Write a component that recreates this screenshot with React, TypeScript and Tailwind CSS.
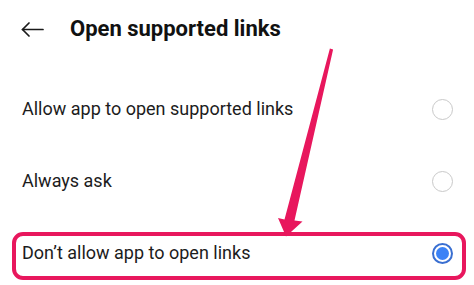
import React from "react";

function Radio({ checked }: { checked?: boolean }) {
  if (checked) {
    return (
      <div className="w-[21px] h-[21px] rounded-full border-[2px] border-[#3a6fd1] flex items-center justify-center shrink-0">
        <div className="w-[13px] h-[13px] rounded-full bg-[#3b82f6]" />
      </div>
    );
  }
  return <div className="w-[21px] h-[21px] rounded-full border-[1.5px] border-[#c9c9c9] shrink-0" />;
}

function Row({ label, checked }: { label: string; checked?: boolean }) {
  return (
    <div className="h-[72px] flex items-center justify-between pl-[22px] pr-[21px]">
      <span className="text-[18px] text-[#1c1c1c] leading-none">{label}</span>
      <Radio checked={checked} />
    </div>
  );
}

export default function App() {
  return (
    <div
      className="relative w-[474px] h-[285px] overflow-hidden bg-white"
      style={{ fontFamily: "Roboto, 'Noto Sans', sans-serif" }}
    >
      <div className="h-[58px] flex items-center pl-[21px]">
        <svg width="23" height="15" viewBox="0 0 23 15" fill="none" stroke="#1a1a1a" strokeWidth="1.7" strokeLinecap="round" strokeLinejoin="round">
          <path d="M22 7.5H1.5" />
          <path d="M8 1L1.5 7.5L8 14" />
        </svg>
        <h1 className="ml-[26px] text-[22px] font-bold text-[#111] leading-none">Open supported links</h1>
      </div>
      <div className="h-[15px]" />
      <Row label="Allow app to open supported links" />
      <Row label="Always ask" />
      <Row label="Don’t allow app to open links" checked />

      <div className="absolute left-[12px] top-[232px] w-[454px] h-[48px] border-[4px] border-[#e8175d] rounded-[11px] pointer-events-none" />
      <svg className="absolute left-0 top-0 pointer-events-none" width="474" height="285" viewBox="0 0 474 285">
        <polygon
          points="329.9,48.5 333.1,49.5 294.5,220.5 302.5,221.5 286,236.5 278,218 284.5,219.5"
          fill="#e8175d"
        />
      </svg>
    </div>
  );
}
